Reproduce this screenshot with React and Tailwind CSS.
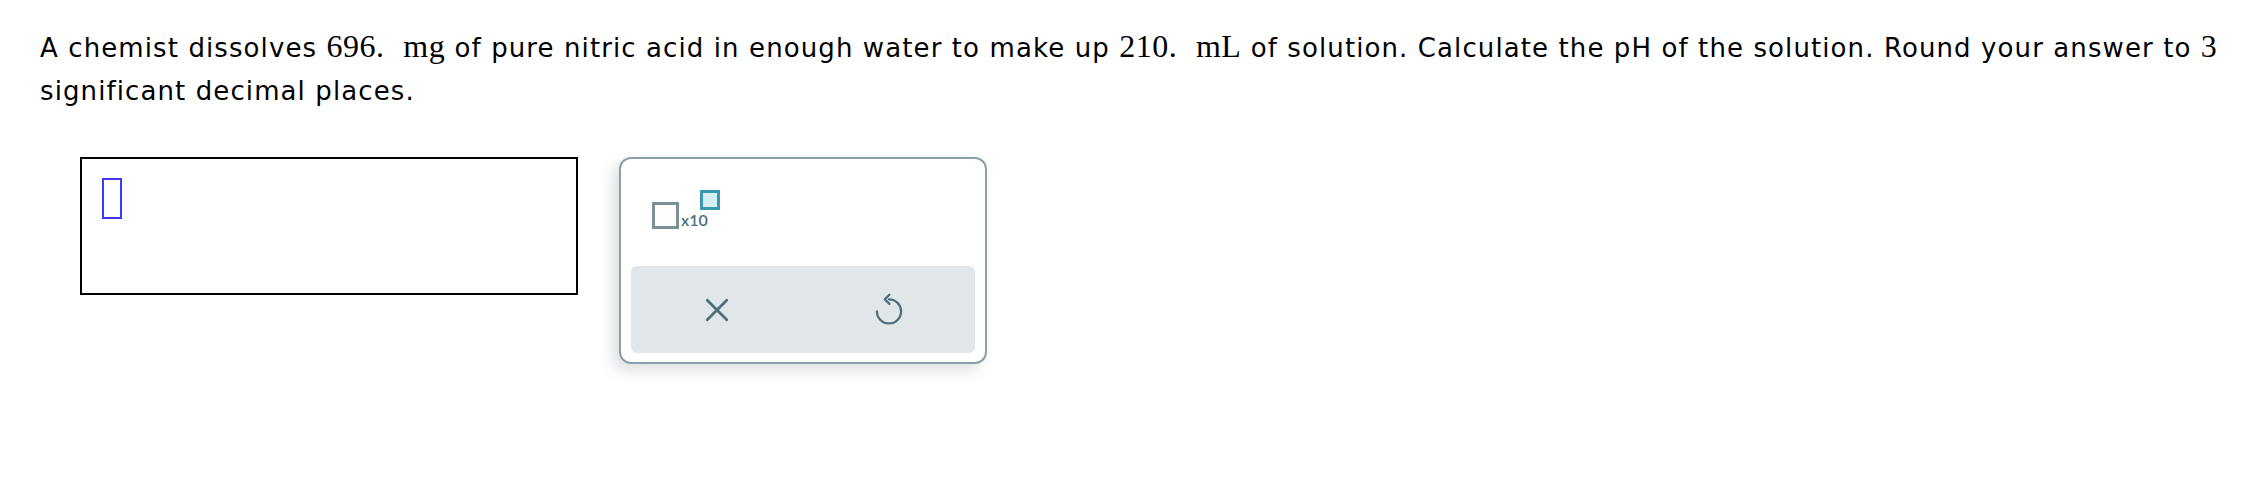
import React from 'react';

const serif = "font-['Liberation_Serif',serif] text-[32px] tracking-[0.5px]";

const UndoIcon = () => (
  <svg width="34" height="34" viewBox="0 0 24 24" fill="none" stroke="#4d6f7b" strokeWidth="1.6" strokeLinecap="round" strokeLinejoin="round">
    <path d="M12 4.5a8.5 8.5 0 1 1-8.5 8.5" />
    <path d="M12.3 1.2L9 4.5l3.3 3.2" />
  </svg>
);

const CloseIcon = () => (
  <svg width="26" height="26" viewBox="0 0 24 24" fill="none" stroke="#4d6f7b" strokeWidth="2.6" strokeLinecap="round">
    <path d="M3 3l18 18M21 3L3 21" />
  </svg>
);

export default function App() {
  return (
    <div className="min-h-screen bg-white pl-[40px] pt-[25px]">
      <p className="font-['DejaVu_Sans',Verdana,sans-serif] text-[26px] leading-[43px] tracking-[1.1px] text-black whitespace-nowrap">
        A chemist dissolves <span className={serif}>696.</span>&nbsp; <span className={serif}>mg</span> of pure nitric acid in enough water to make up{' '}
        <span className={serif}>210.</span>&nbsp; <span className={serif}>mL</span> of solution. Calculate the pH of the solution. Round your answer to{' '}
        <span className={serif}>3</span>
        <br />
        significant decimal places.
      </p>

      <div className="mt-[44px] ml-[40px] flex items-start gap-[41px]">
        {/* answer field */}
        <div className="w-[498px] h-[138px] border-2 border-black pl-[20px] pt-[19px]">
          <div className="w-[20px] h-[41px] border-2 border-[#3a3aff]" />
        </div>

        {/* tool palette */}
        <div className="w-[368px] h-[207px] rounded-[12px] border-2 border-[#8aa0a8] bg-white shadow-[-6px_6px_14px_rgba(60,80,90,0.18)] px-[10px] pb-[9px] flex flex-col">
          <div className="h-[107px] pl-[21px] pt-[31px]">
            <button className="flex items-end">
              <span className="w-[27px] h-[27px] border-[3px] border-[#7b9197]" />
              <span className="font-['Lato',sans-serif] font-semibold text-[16px] leading-none text-[#4d6f7b] ml-[2px] mb-[1px]">x10</span>
              <span className="w-[20px] h-[20px] border-[3px] border-[#3c96ac] bg-[#d4eef3] -ml-[8px] mb-[19px]" />
            </button>
          </div>
          <div className="flex-1 rounded-[6px] bg-[#e1e6e8] grid grid-cols-2">
            <button className="flex items-center justify-center">
              <CloseIcon />
            </button>
            <button className="flex items-center justify-center">
              <UndoIcon />
            </button>
          </div>
        </div>
      </div>
    </div>
  );
}
